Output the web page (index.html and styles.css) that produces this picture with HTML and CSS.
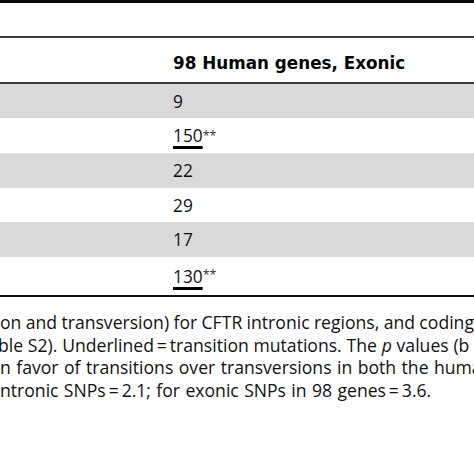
FILE: index.html
```html
<!DOCTYPE html>
<html>
<head>
<meta charset="utf-8">
<link rel="stylesheet" href="styles.css">
</head>
<body>
<div class="page">
  <div class="rule-top"></div>
  <div class="title-space"></div>
  <div class="rule-mid"></div>
  <div class="row head"><span>98 Human genes, Exonic</span></div>
  <div class="rule-mid"></div>
  <div class="row shade r34">9</div>
  <div class="row r35"><span class="u">150</span><span class="sig">**</span></div>
  <div class="row shade r35">22</div>
  <div class="row r34">29</div>
  <div class="row shade r35">17</div>
  <div class="row r38"><span class="u">130</span><span class="sig">**</span></div>
  <div class="rule-bottom"></div>
  <div class="foot">
    <div class="line l1">on and transversion) for CFTR intronic regions, and coding</div>
    <div class="line l2">ble S2). Underlined&thinsp;=&thinsp;transition mutations. The <i>p</i> values (b</div>
    <div class="line l3">n favor of transitions over transversions in both the huma</div>
    <div class="line l4">ntronic SNPs&thinsp;=&thinsp;2.1; for exonic SNPs in 98 genes&thinsp;=&thinsp;3.6.</div>
  </div>
</div>
</body>
</html>
```

FILE: styles.css
```css
html, body {
  margin: 0;
  padding: 0;
  background: #ffffff;
}
.page {
  width: 474px;
  height: 474px;
  overflow: hidden;
  font-family: "Open Sans", "Noto Sans", sans-serif;
  font-size: 17.3px;
  color: #111111;
}
.rule-top {
  height: 3px;
  background: #0a0a0a;
}
.title-space {
  height: 33px;
}
.rule-mid {
  height: 2px;
  background: #3a3a3a;
}
.rule-bottom {
  height: 2px;
  background: #111111;
}
.row {
  display: flex;
  align-items: center;
  padding-left: 173px;
  box-sizing: border-box;
  white-space: nowrap;
}
.head {
  height: 44px;
  padding-top: 5px;
  font-family: "DejaVu Sans", sans-serif;
  font-weight: bold;
  font-size: 16.8px;
  color: #050505;
}
.shade {
  background: #d9d9d9;
}
.r34 { height: 34px; }
.r35 { height: 35px; }
.r38 { height: 38px; }
.u {
  text-decoration: underline;
  text-decoration-thickness: 3px;
  text-underline-offset: 4px;
  text-decoration-skip-ink: none;
  text-decoration-color: #000;
}
.sig {
  font-size: 12.5px;
  align-self: flex-start;
  margin-top: 9px;
  color: #333;
}
.foot {
  padding-top: 14px;
  font-size: 17.6px;
  line-height: 22.7px;
}
.line {
  white-space: nowrap;
}
.l1 { word-spacing: -0.2px; }
.l2 { margin-left: -2px; word-spacing: 0.2px; }
.l3 { word-spacing: 0.9px; }
.l4 { word-spacing: 0.8px; }
```
